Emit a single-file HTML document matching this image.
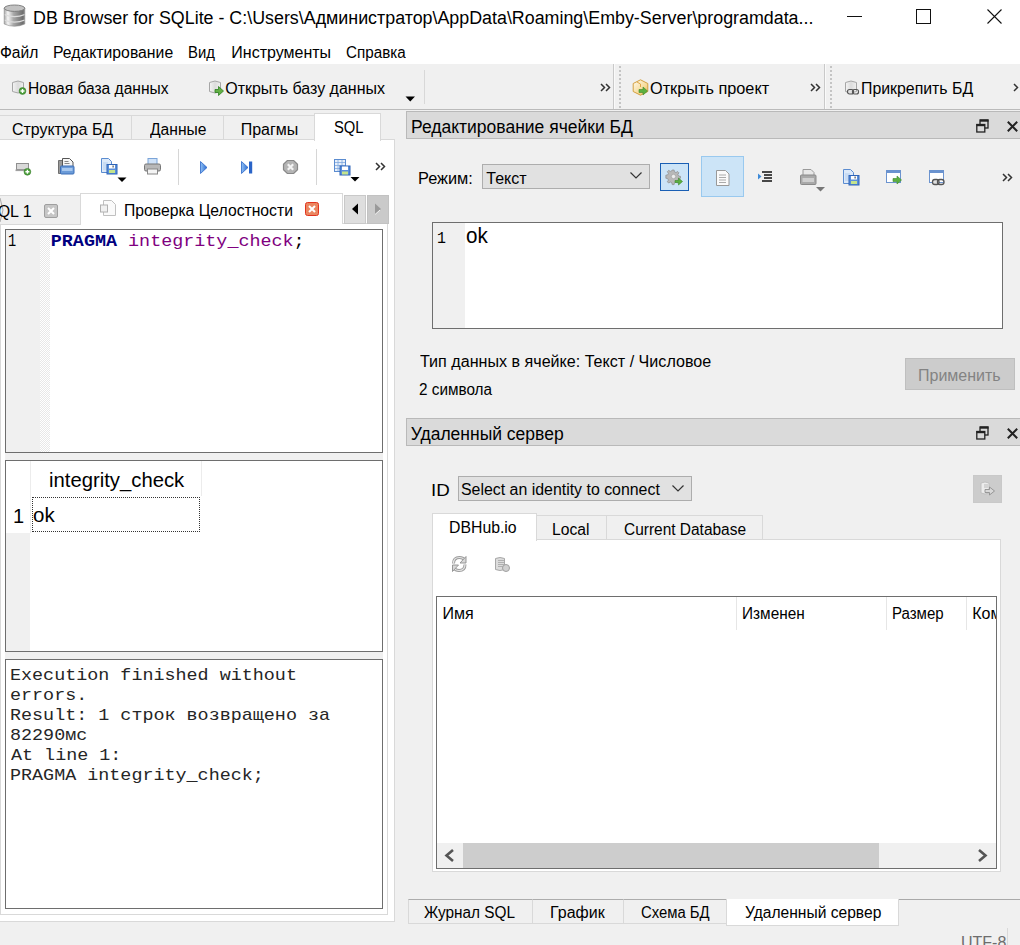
<!DOCTYPE html>
<html><head><meta charset="utf-8"><title>DB Browser for SQLite</title>
<style>
html,body{margin:0;padding:0}
body{width:1020px;height:945px;overflow:hidden;position:relative;background:#f0f0f0;font-family:"Liberation Sans",sans-serif}
.b{position:absolute;box-sizing:border-box}
.t{position:absolute;white-space:pre}
svg{position:absolute;overflow:visible}
</style></head><body>
<!-- title + menu -->
<div class=b style="left:0;top:0;width:1020px;height:64px;background:#fff"></div>
<!-- app icon -->
<svg style="left:3px;top:3px" width="24" height="25" viewBox="0 0 24 25">
<defs><linearGradient id="dbg" x1="0" x2="1"><stop offset="0" stop-color="#a8a8a8"/><stop offset=".18" stop-color="#f6f6f6"/><stop offset=".45" stop-color="#a9a9a9"/><stop offset=".9" stop-color="#6f6f6f"/><stop offset="1" stop-color="#8a8a8a"/></linearGradient></defs>
<path d="M1.2 5 Q11.5 0.5 21.8 5 V21 Q11.5 25.5 1.2 21 Z" fill="url(#dbg)"/>
<ellipse cx="11.5" cy="5.2" rx="10.3" ry="3.2" fill="#c2c2c2" stroke="#777" stroke-width=".9"/>
<path d="M1.2 11.5 Q11.5 15.8 21.8 11.5 M1.2 17 Q11.5 21.3 21.8 17" stroke="#dcdcdc" stroke-width="1.3" fill="none"/>
<path d="M1.2 5 V21 Q11.5 25.5 21.8 21 V5" stroke="#8a8a8a" stroke-width=".6" fill="none"/>
</svg>
<!-- window controls -->
<div class=b style="left:847px;top:16px;width:15px;height:1px;background:#111"></div>
<div class=b style="left:916px;top:9px;width:15px;height:15px;border:1px solid #111"></div>
<svg style="left:987px;top:9px" width="15" height="15" viewBox="0 0 15 15"><path d="M0.5 0.5 L14.5 14.5 M14.5 0.5 L0.5 14.5" stroke="#111" stroke-width="1.1"/></svg>

<!-- toolbar bottom line -->
<div class=b style="left:0;top:109px;width:1020px;height:1px;background:#bababa"></div>
<!-- toolbar icons -->
<svg style="left:12px;top:80px" width="16" height="16" viewBox="0 0 16 16">
<defs><linearGradient id="cyl" x1="0" x2="1"><stop offset="0" stop-color="#f4f4f4"/><stop offset=".5" stop-color="#dcdcdc"/><stop offset="1" stop-color="#f0f0f0"/></linearGradient></defs>
<path d="M0.5 2.5 Q6 -0.5 11.5 2.5 V11.5 Q6 14.5 0.5 11.5 Z" fill="url(#cyl)" stroke="#a6a6a6"/>
<circle cx="10.5" cy="11" r="3.4" fill="#4a9e3a" stroke="#3a7f2d" stroke-width=".6"/><path d="M10.5 9v4M8.5 11h4" stroke="#fff" stroke-width="1.4"/>
</svg>
<svg style="left:209px;top:80px" width="16" height="16" viewBox="0 0 16 16">
<path d="M0.5 2.5 Q6 -0.5 11.5 2.5 V11.5 Q6 14.5 0.5 11.5 Z" fill="url(#cyl)" stroke="#a6a6a6"/>
<path d="M6 9.5h3.5v-3l5 4.5-5 4.5v-3h-3.5z" fill="#62b044" stroke="#2f7f22" stroke-width=".8"/>
</svg>
<svg style="left:405px;top:96px" width="11" height="6" viewBox="0 0 11 6"><path d="M0.5 0.5 H10 L5.25 5.5Z" fill="#000"/></svg>
<div class=b style="left:424px;top:70px;width:1px;height:34px;background:#d8d8d8"></div>
<!-- >> glyphs -->
<svg style="left:600px;top:83px" width="11" height="9" viewBox="0 0 11 9"><path d="M1 1 L4.5 4.5 L1 8 M6 1 L9.5 4.5 L6 8" stroke="#333" stroke-width="1.5" fill="none"/></svg>
<div class=b style="left:613px;top:64px;width:1px;height:45px;background:#c9c9c9"></div><div class=b style="left:614px;top:64px;width:1px;height:45px;background:#fafafa"></div>
<div class=b style="left:618.5px;top:66px;width:2px;height:42px;background:repeating-linear-gradient(#c4c4c4 0 2px,transparent 2px 4px)"></div>
<svg style="left:632px;top:79px" width="17" height="17" viewBox="0 0 17 17">
<defs><linearGradient id="cube" x1="0" y1="0" x2="1" y2="1"><stop offset="0" stop-color="#fffaf0"/><stop offset=".6" stop-color="#f7dc9a"/><stop offset="1" stop-color="#e9b54e"/></linearGradient></defs>
<path d="M8.5 0.8 L15.8 4.5 V12.5 L8.5 16.2 L1.2 12.5 V4.5 Z" fill="url(#cube)" stroke="#d3a040"/>
<path d="M5 3 L8.5 5 V8" stroke="#e0a848" fill="none"/>
<path d="M7 10.5h4v-2.5l4.5 4-4.5 4v-2.5h-4z" fill="#5cb040" stroke="#3d8a2a" stroke-width=".6"/>
</svg>
<svg style="left:810px;top:83px" width="11" height="9" viewBox="0 0 11 9"><path d="M1 1 L4.5 4.5 L1 8 M6 1 L9.5 4.5 L6 8" stroke="#333" stroke-width="1.5" fill="none"/></svg>
<div class=b style="left:824px;top:64px;width:1px;height:45px;background:#c9c9c9"></div><div class=b style="left:825px;top:64px;width:1px;height:45px;background:#fafafa"></div>
<div class=b style="left:829.5px;top:66px;width:2px;height:42px;background:repeating-linear-gradient(#c4c4c4 0 2px,transparent 2px 4px)"></div>
<svg style="left:845px;top:80px" width="16" height="16" viewBox="0 0 16 16">
<path d="M0.5 2.5 Q6 -0.5 11.5 2.5 V11.5 Q6 14.5 0.5 11.5 Z" fill="url(#cyl)" stroke="#a6a6a6"/>
<rect x="2.5" y="9.5" width="6" height="4.5" rx="2" fill="#e0e0e0" stroke="#555" stroke-width="1.2"/><rect x="7.5" y="9.5" width="6" height="4.5" rx="2" fill="none" stroke="#555" stroke-width="1.2"/>
</svg>
<svg style="left:1013px;top:83px" width="11" height="9" viewBox="0 0 11 9"><path d="M1 1 L4.5 4.5 L1 8" stroke="#333" stroke-width="1.5" fill="none"/></svg>

<!-- ========== LEFT PANEL ========== -->
<!-- main tabs -->
<div class=b style="left:-1px;top:115px;width:133px;height:25px;border:1px solid #d9d9d9;background:#f0f0f0"></div>
<div class=b style="left:132px;top:115px;width:92px;height:25px;border:1px solid #d9d9d9;border-left:none;background:#f0f0f0"></div>
<div class=b style="left:224px;top:115px;width:91px;height:25px;border:1px solid #d9d9d9;border-left:none;background:#f0f0f0"></div>
<!-- page -->
<div class=b style="left:-1px;top:139px;width:396px;height:783px;border:1px solid #d9d9d9;background:#fff"></div>
<div class=b style="left:314px;top:113px;width:67px;height:28px;border:1px solid #d9d9d9;border-bottom:none;background:#fff"></div>
<!-- sql toolbar icons -->
<svg style="left:15px;top:160px" width="18" height="17" viewBox="0 0 18 17">
<rect x="1.5" y="3.5" width="12" height="6" fill="#d9d9d9" stroke="#8f8f8f"/><rect x="0.5" y="9.5" width="14" height="1.6" fill="#a0a0a0"/>
<circle cx="12.4" cy="11.8" r="3.4" fill="#4a9e3a" stroke="#3a7f2d" stroke-width=".6"/><path d="M12.4 9.8v4M10.4 11.8h4" stroke="#fff" stroke-width="1.4"/>
</svg>
<svg style="left:58px;top:158px" width="17" height="17" viewBox="0 0 17 17">
<path d="M0.5 2.5h4v13h-4z" fill="#9a9a9a" stroke="#6f6f6f"/>
<path d="M4.5 0.5h7l3.5 3.5v6h-10.5z" fill="#f6f6f6" stroke="#555"/><path d="M6.5 3.5h4M6.5 5.5h5" stroke="#888"/>
<rect x="2.5" y="8" width="13.5" height="8" rx="1" fill="#6b9bd8" stroke="#3d6fb8"/><rect x="4" y="10" width="10.5" height="3" fill="#a8c8ef"/>
</svg>
<svg style="left:101px;top:158px" width="26" height="25" viewBox="0 0 26 25">
<path d="M0.5 0.5h7l3 3v11h-10z" fill="#dce9f9" stroke="#5b8cd0"/><path d="M2 5h5M2 7h4M2 9h4M2 11h4" stroke="#a9c6ec" stroke-width=".8"/>
<rect x="6" y="6.5" width="10" height="9.5" fill="#5a8fda" stroke="#2f64b8"/><rect x="8" y="7" width="6" height="3.5" fill="#fff"/><rect x="11.5" y="7.5" width="1.2" height="2" fill="#456"/><rect x="8" y="12" width="6" height="3" fill="#c4e48c"/>
<path d="M16.5 19.5h9l-4.5 4.5z" fill="#000"/>
</svg>
<svg style="left:144px;top:158px" width="17" height="17" viewBox="0 0 17 17">
<rect x="4" y="0.5" width="9" height="6" fill="#cfe2f8" stroke="#7ba4d8"/>
<rect x="0.5" y="6" width="16" height="7" rx="1.5" fill="#b8b8b8" stroke="#777"/>
<rect x="3.5" y="11" width="10" height="5" fill="#f4f4f4" stroke="#888"/>
</svg>
<div class=b style="left:178px;top:149px;width:1px;height:36px;background:#d6d6d6"></div>
<svg style="left:200px;top:161px" width="8" height="13" viewBox="0 0 8 13"><defs><linearGradient id="pl" x1="0" x2="1"><stop offset="0" stop-color="#8fc0f4"/><stop offset="1" stop-color="#2a6ad0"/></linearGradient></defs><path d="M0.5 0.5 L7 6.5 L0.5 12.5Z" fill="url(#pl)" stroke="#2a64c8" stroke-width=".8"/></svg>
<svg style="left:241px;top:161px" width="12" height="13" viewBox="0 0 12 13"><path d="M0.5 0.5 L7 6.5 L0.5 12.5Z" fill="url(#pl)" stroke="#2a64c8" stroke-width=".8"/><rect x="8" y="0.5" width="3.2" height="12" fill="#2a64c8"/></svg>
<svg style="left:283px;top:160px" width="15" height="14" viewBox="0 0 15 14"><path d="M4.3 0.5h6.4l3.8 3.8v5.4l-3.8 3.8H4.3L0.5 9.7V4.3z" fill="#b4b4b4" stroke="#888" stroke-width="1.2"/><path d="M4.8 4.3l5.4 5.4M10.2 4.3l-5.4 5.4" stroke="#f4f4f4" stroke-width="2.2"/></svg>
<div class=b style="left:316px;top:149px;width:1px;height:36px;background:#d6d6d6"></div>
<svg style="left:334px;top:159px" width="26" height="23" viewBox="0 0 26 23">
<rect x="0.5" y="0.5" width="11" height="12" fill="#e8f0fa" stroke="#5b8cd0"/><path d="M1 3.5h10M1 6.5h10M1 9.5h10M4 1v11M8 1v11" stroke="#7fa8e0" stroke-width=".8"/>
<rect x="6" y="7" width="10" height="9" fill="#5a8fda" stroke="#2f64b8"/><rect x="8" y="7.5" width="6" height="3.5" fill="#fff"/><rect x="8" y="12.5" width="6" height="3" fill="#c4e48c"/>
<path d="M16.5 18h9l-4.5 4.5z" fill="#000"/>
</svg>
<svg style="left:375px;top:162px" width="11" height="9" viewBox="0 0 11 9"><path d="M1 1 L4.5 4.5 L1 8 M6 1 L9.5 4.5 L6 8" stroke="#333" stroke-width="1.5" fill="none"/></svg>

<!-- inner tab widget -->
<div class=b style="left:0px;top:223px;width:388px;height:692px;border:1px solid #d9d9d9;background:#fff"></div>
<div class=b style="left:-1px;top:195px;width:82px;height:30px;border:1px solid #d9d9d9;background:#f0f0f0"></div>
<svg style="left:0;top:196px" width="4" height="28" viewBox="0 0 4 28"><path d="M0 2 L3 14 L0 26" stroke="#aaa" fill="none"/></svg>
<div class=b style="left:44px;top:204px;width:14px;height:14px;background:#c6c6c6;border:1px solid #9f9f9f;border-radius:2px"></div>
<svg style="left:47px;top:207px" width="8" height="8" viewBox="0 0 8 8"><path d="M1 1 L7 7 M7 1 L1 7" stroke="#fff" stroke-width="2"/></svg>
<div class=b style="left:80px;top:193px;width:263px;height:31px;border:1px solid #d9d9d9;border-bottom:none;background:#fff"></div>
<svg style="left:100px;top:200px" width="17" height="16" viewBox="0 0 17 16"><path d="M3.5 0.5h8l4 4v11h-12z" fill="#fafafa" stroke="#c0c0c0"/><rect x="0.5" y="5" width="7" height="7" fill="#f0f0f0" stroke="#b0b0b0"/></svg>
<div class=b style="left:305px;top:202px;width:14px;height:14px;background:#ea8660;border:1.5px solid #e2341e;border-radius:2.5px"></div>
<svg style="left:308px;top:205px" width="8" height="8" viewBox="0 0 8 8"><path d="M1 1 L7 7 M7 1 L1 7" stroke="#fff" stroke-width="2"/></svg>
<!-- scroll buttons -->
<div class=b style="left:344px;top:195px;width:22px;height:29px;background:#dedede;border:1px solid #c9c9c9"></div>
<div class=b style="left:367px;top:195px;width:22px;height:29px;background:#cacaca;border:1px solid #c2c2c2"></div>
<svg style="left:351px;top:203px" width="8" height="12" viewBox="0 0 8 12"><path d="M7 0.5 L1 6 L7 11.5Z" fill="#000"/></svg>
<svg style="left:374px;top:203px" width="8" height="12" viewBox="0 0 8 12"><path d="M1 0.5 L7 6 L1 11.5Z" fill="#9a9a9a"/><path d="M1 11.5 L6 7" stroke="#f4f4f4" stroke-width="1"/></svg>

<!-- editor -->
<div class=b style="left:5px;top:229px;width:378px;height:224px;border:1px solid #6e6e6e;background:#fff"></div>
<div class=b style="left:6px;top:230px;width:34px;height:222px;background:#f0f0f0"></div>
<div class=b style="left:40px;top:230px;width:10px;height:222px;background:repeating-conic-gradient(#e8e8e8 0 25%, #ffffff 0 50%) 0 0/2px 2px"></div>

<div class=b style="left:5px;top:453px;width:378px;height:7px;background:#f0f0f0"></div>
<div class=b style="left:5px;top:652px;width:378px;height:7px;background:#f0f0f0"></div>
<!-- result grid -->
<div class=b style="left:5px;top:460px;width:378px;height:192px;border:1px solid #6e6e6e;background:#fff"></div>
<div class=b style="left:6px;top:533px;width:24px;height:118px;background:#f0f0f0"></div>
<div class=b style="left:30px;top:461px;width:1px;height:72px;background:#ececec"></div>
<div class=b style="left:201px;top:461px;width:1px;height:35px;background:#ececec"></div>
<div class=b style="left:32px;top:497px;width:168px;height:35px;border:1px dotted #333"></div>

<!-- messages -->
<div class=b style="left:5px;top:659px;width:378px;height:250px;border:1px solid #6e6e6e;background:#fff"></div>

<!-- ========== RIGHT DOCK 1 ========== -->
<div class=b style="left:406px;top:111px;width:620px;height:28px;border:1px solid #b9b9b9;background:#dadada"></div>
<svg style="left:976px;top:119px" width="13" height="14" viewBox="0 0 13 14">
<rect x="4" y="1" width="8" height="8" fill="none" stroke="#222" stroke-width="1.3"/><rect x="4" y="0.5" width="8.5" height="2.2" fill="#222"/>
<rect x="0.8" y="5.5" width="8" height="7.5" fill="#dadada" stroke="#222" stroke-width="1.3"/><rect x="0.5" y="5" width="8.5" height="2.2" fill="#222"/>
</svg>
<svg style="left:1007px;top:121px" width="11" height="11" viewBox="0 0 11 11"><path d="M0.8 0.8 L10.2 10.2 M10.2 0.8 L0.8 10.2" stroke="#222" stroke-width="2"/></svg>

<!-- mode combo -->
<div class=b style="left:482px;top:164px;width:168px;height:25px;border:1px solid #adadad;background:#e1e1e1"></div>
<svg style="left:630px;top:172px" width="12" height="7" viewBox="0 0 12 7"><path d="M0.5 0.5 L6 6 L11.5 0.5" stroke="#333" stroke-width="1.2" fill="none"/></svg>
<div class=b style="left:660px;top:163px;width:29px;height:28px;border:1.5px solid #1a5fb4;background:#cce4f7"></div>
<svg style="left:667px;top:170px" width="16" height="16" viewBox="0 0 16 16">
<path d="M6 0.5h2l.4 2 1.6.7 1.7-1.1 1.4 1.4-1.1 1.7.7 1.6 2 .4v2l-2 .4-.7 1.6 1.1 1.7-1.4 1.4-1.7-1.1-1.6.7-.4 2H6l-.4-2-1.6-.7-1.7 1.1-1.4-1.4 1.1-1.7-.7-1.6-2-.4V6l2-.4.7-1.6-1.1-1.7 1.4-1.4 1.7 1.1 1.6-.7z" transform="translate(-.5 -.5) scale(.95)" fill="#b8b8b8" stroke="#8a8a8a" stroke-width=".7"/><circle cx="6.5" cy="6.5" r="2.2" fill="#ececec" stroke="#999" stroke-width=".6"/>
<path d="M8 10.5h3.5v-2.5l4 3.5-4 3.5v-2.5H8z" fill="#5cb040" stroke="#3d8a2a" stroke-width=".6"/>
</svg>
<div class=b style="left:701px;top:156px;width:43px;height:41px;border:1px solid #99c9ef;background:#cce4f7"></div>
<svg style="left:716px;top:170px" width="14" height="16" viewBox="0 0 14 16"><path d="M0.5 0.5h9l3.5 3.5v11.5h-12.5z" fill="#fafafa" stroke="#999"/><path d="M3 5h7M3 7.5h7M3 10h7M3 12.5h7" stroke="#aaa"/></svg>
<svg style="left:758px;top:171px" width="14" height="12" viewBox="0 0 14 12"><path d="M4 1h10M6 4h8M6 7h8M4 10h10" stroke="#111" stroke-width="1.4"/><path d="M0 2.5 L3.5 5.5 L0 8.5Z" fill="#3d8ad8"/></svg>
<svg style="left:800px;top:169px" width="26" height="23" viewBox="0 0 26 23">
<path d="M3 0.5h8l3 3v5h-11z" fill="#e8e8e8" stroke="#9a9a9a"/>
<rect x="0.5" y="6" width="15.5" height="9.5" rx="1" fill="#a9a9a9" stroke="#8a8a8a"/><rect x="2.5" y="9" width="11.5" height="4" fill="#cfcfcf"/>
<path d="M16 18h9l-4.5 4.5z" fill="#777"/>
</svg>
<svg style="left:843px;top:169px" width="17" height="17" viewBox="0 0 17 17">
<path d="M0.5 0.5h7l3 3v11h-10z" fill="#dce9f9" stroke="#5b8cd0"/><path d="M2 5h5M2 7h4M2 9h4M2 11h4" stroke="#a9c6ec" stroke-width=".8"/>
<rect x="6" y="6.5" width="10" height="9.5" fill="#5a8fda" stroke="#2f64b8"/><rect x="8" y="7" width="6" height="3.5" fill="#fff"/><rect x="11.5" y="7.5" width="1.2" height="2" fill="#456"/><rect x="8" y="12" width="6" height="3" fill="#c4e48c"/>
</svg>
<svg style="left:886px;top:170px" width="17" height="16" viewBox="0 0 17 16">
<rect x="0.5" y="0.5" width="14" height="12" fill="#fff" stroke="#6b93cf"/><rect x="0.5" y="0.5" width="14" height="2.5" fill="#6b93cf"/>
<path d="M7 8.5h4v-2.5l4.5 4-4.5 4v-2.5h-4z" fill="#5cb040" stroke="#3d8a2a" stroke-width=".6"/>
</svg>
<svg style="left:929px;top:170px" width="17" height="16" viewBox="0 0 17 16">
<rect x="0.5" y="0.5" width="14" height="12" fill="#fff" stroke="#6b93cf"/><rect x="0.5" y="0.5" width="14" height="2.5" fill="#6b93cf"/>
<rect x="3.5" y="9.5" width="6.5" height="5" rx="2.3" fill="#e0e0e0" stroke="#555" stroke-width="1.3"/><rect x="8.5" y="9.5" width="6.5" height="5" rx="2.3" fill="none" stroke="#555" stroke-width="1.3"/>
</svg>
<svg style="left:1002px;top:173px" width="11" height="9" viewBox="0 0 11 9"><path d="M1 1 L4.5 4.5 L1 8 M6 1 L9.5 4.5 L6 8" stroke="#333" stroke-width="1.5" fill="none"/></svg>

<!-- cell edit box -->
<div class=b style="left:432px;top:222px;width:571px;height:107px;border:1px solid #6e6e6e;background:#fff"></div>
<div class=b style="left:433px;top:223px;width:32px;height:105px;background:#f0f0f0"></div>
<!-- apply button -->
<div class=b style="left:905px;top:358px;width:110px;height:32px;border:1px solid #bfbfbf;background:#cccccc"></div>

<!-- ========== RIGHT DOCK 2 ========== -->
<div class=b style="left:406px;top:418px;width:620px;height:28px;border:1px solid #b9b9b9;background:#dadada"></div>
<svg style="left:976px;top:426px" width="13" height="14" viewBox="0 0 13 14">
<rect x="4" y="1" width="8" height="8" fill="none" stroke="#222" stroke-width="1.3"/><rect x="4" y="0.5" width="8.5" height="2.2" fill="#222"/>
<rect x="0.8" y="5.5" width="8" height="7.5" fill="#dadada" stroke="#222" stroke-width="1.3"/><rect x="0.5" y="5" width="8.5" height="2.2" fill="#222"/>
</svg>
<svg style="left:1007px;top:428px" width="11" height="11" viewBox="0 0 11 11"><path d="M0.8 0.8 L10.2 10.2 M10.2 0.8 L0.8 10.2" stroke="#222" stroke-width="2"/></svg>

<!-- identity combo -->
<div class=b style="left:458px;top:476px;width:234px;height:25px;border:1px solid #adadad;background:#e1e1e1"></div>
<svg style="left:672px;top:485px" width="12" height="7" viewBox="0 0 12 7"><path d="M0.5 0.5 L6 6 L11.5 0.5" stroke="#333" stroke-width="1.2" fill="none"/></svg>
<div class=b style="left:973px;top:475px;width:29px;height:28px;border:1px solid #c9c9c9;background:#cccccc"></div>
<svg style="left:980px;top:481px" width="16" height="17" viewBox="0 0 16 17"><path d="M1 2 Q5 0 9 2 V12 Q5 14 1 12Z" fill="#ececec" stroke="#c0c0c0"/><path d="M4 4h4M4 6h4" stroke="#bbb"/><path d="M5 8.5h4.5v-2.5l5 4-5 4v-2.5H5z" fill="#d8d8d8" stroke="#909090" stroke-width=".9"/></svg>

<!-- tab widget -->
<div class=b style="left:432px;top:539px;width:569px;height:333px;border:1px solid #d9d9d9;background:#fff"></div>
<div class=b style="left:536px;top:515px;width:71px;height:25px;border:1px solid #d9d9d9;background:#f0f0f0"></div>
<div class=b style="left:606px;top:515px;width:157px;height:25px;border:1px solid #d9d9d9;background:#f0f0f0"></div>
<div class=b style="left:432px;top:513px;width:105px;height:28px;border:1px solid #d9d9d9;border-bottom:none;background:#fff"></div>
<svg style="left:452px;top:556px" width="15" height="16" viewBox="0 0 15 16">
<path d="M1.5 7.5 Q1.5 1.5 7.5 1.5 Q11 1.5 12.5 4 M13 8.5 Q13 14.5 7 14.5 Q3.5 14.5 2 12" stroke="#9c9c9c" stroke-width="3" fill="none"/>
<path d="M1.5 7.5 Q1.5 1.5 7.5 1.5 Q11 1.5 12.5 4 M13 8.5 Q13 14.5 7 14.5 Q3.5 14.5 2 12" stroke="#e6e6e6" stroke-width="1.2" fill="none"/>
<path d="M14 0.5 V7 H8Z M0.5 15.5 V9 H6.5Z" fill="#d8d8d8" stroke="#8f8f8f" stroke-width=".9"/></svg>
<svg style="left:495px;top:557px" width="15" height="15" viewBox="0 0 15 15"><path d="M0.5 1.5 Q5 -0.5 9.5 1.5 V12.5 Q5 14.5 0.5 12.5Z" fill="#dcdcdc" stroke="#a8a8a8"/><path d="M3 3.5h6M3 5.5h6M3 7.5h6M3 9.5h6" stroke="#b0b0b0"/><circle cx="11" cy="11" r="3.5" fill="#d0d0d0" stroke="#a0a0a0"/></svg>
<!-- tree view -->
<div class=b style="left:436px;top:596px;width:561px;height:273px;border:1px solid #6e6e6e;background:#fff"></div>
<div class=b style="left:736px;top:597px;width:1px;height:33px;background:#e6e6e6"></div>
<div class=b style="left:886px;top:597px;width:1px;height:33px;background:#e6e6e6"></div>
<div class=b style="left:966px;top:597px;width:1px;height:33px;background:#e6e6e6"></div>
<!-- scrollbar -->
<div class=b style="left:437px;top:843px;width:559px;height:25px;background:#f0f0f0"></div>
<div class=b style="left:463px;top:843px;width:416px;height:25px;background:#cdcdcd"></div>
<svg style="left:444px;top:849px" width="11" height="13" viewBox="0 0 11 13"><path d="M9 1 L2.5 6.5 L9 12" stroke="#555" stroke-width="2.6" fill="none"/></svg>
<svg style="left:977px;top:849px" width="11" height="13" viewBox="0 0 11 13"><path d="M2 1 L8.5 6.5 L2 12" stroke="#555" stroke-width="2.6" fill="none"/></svg>

<!-- bottom tabs -->
<div class=b style="left:898px;top:899px;width:122px;height:1px;background:#a9a9a9"></div>
<div class=b style="left:408px;top:899px;width:125px;height:25px;border:1px solid #d9d9d9;border-top-color:#acacac;background:#f0f0f0"></div>
<div class=b style="left:532px;top:899px;width:92px;height:25px;border:1px solid #d9d9d9;border-top-color:#acacac;background:#f0f0f0"></div>
<div class=b style="left:623px;top:899px;width:104px;height:25px;border:1px solid #d9d9d9;border-top-color:#acacac;background:#f0f0f0"></div>
<div class=b style="left:726px;top:899px;width:173px;height:27px;border:1px solid #d9d9d9;border-top:none;background:#fff"></div>
<div class=b style="left:1007px;top:928px;width:1px;height:17px;background:#d9d9d9"></div>
<div class=t style="left:32.71px;top:9.30px;font-family:'Liberation Sans', sans-serif;font-size:18px;line-height:18px;color:#000;font-weight:normal;transform:scaleX(0.9915);transform-origin:0 0;">DB Browser for SQLite - C:\Users\Администратор\AppData\Roaming\Emby-Server\programdata...</div>
<div class=t style="left:-0.38px;top:45.00px;font-family:'Liberation Sans', sans-serif;font-size:16px;line-height:16px;color:#000;font-weight:normal;transform:scaleX(0.9757);transform-origin:0 0;">Файл</div>
<div class=t style="left:53.01px;top:45.00px;font-family:'Liberation Sans', sans-serif;font-size:16px;line-height:16px;color:#000;font-weight:normal;transform:scaleX(0.9858);transform-origin:0 0;">Редактирование</div>
<div class=t style="left:188.07px;top:45.00px;font-family:'Liberation Sans', sans-serif;font-size:16px;line-height:16px;color:#000;font-weight:normal;transform:scaleX(0.9286);transform-origin:0 0;">Вид</div>
<div class=t style="left:231.30px;top:45.00px;font-family:'Liberation Sans', sans-serif;font-size:16px;line-height:16px;color:#000;font-weight:normal;">Инструменты</div>
<div class=t style="left:345.55px;top:45.00px;font-family:'Liberation Sans', sans-serif;font-size:16px;line-height:16px;color:#000;font-weight:normal;transform:scaleX(0.9516);transform-origin:0 0;">Справка</div>
<div class=t style="left:27.83px;top:81.00px;font-family:'Liberation Sans', sans-serif;font-size:16px;line-height:16px;color:#000;font-weight:normal;transform:scaleX(0.9734);transform-origin:0 0;">Новая база данных</div>
<div class=t style="left:225.20px;top:81.00px;font-family:'Liberation Sans', sans-serif;font-size:16px;line-height:16px;color:#000;font-weight:normal;">Открыть базу данных</div>
<div class=t style="left:650.18px;top:81.00px;font-family:'Liberation Sans', sans-serif;font-size:16px;line-height:16px;color:#000;font-weight:normal;transform:scaleX(1.0172);transform-origin:0 0;">Открыть проект</div>
<div class=t style="left:861.01px;top:81.00px;font-family:'Liberation Sans', sans-serif;font-size:16px;line-height:16px;color:#000;font-weight:normal;transform:scaleX(0.9911);transform-origin:0 0;">Прикрепить БД</div>
<div class=t style="left:12.31px;top:122.00px;font-family:'Liberation Sans', sans-serif;font-size:16px;line-height:16px;color:#000;font-weight:normal;transform:scaleX(0.9941);transform-origin:0 0;">Структура БД</div>
<div class=t style="left:150.00px;top:122.00px;font-family:'Liberation Sans', sans-serif;font-size:16px;line-height:16px;color:#000;font-weight:normal;transform:scaleX(0.9772);transform-origin:0 0;">Данные</div>
<div class=t style="left:240.70px;top:122.00px;font-family:'Liberation Sans', sans-serif;font-size:16px;line-height:16px;color:#000;font-weight:normal;">Прагмы</div>
<div class=t style="left:334.08px;top:120.00px;font-family:'Liberation Sans', sans-serif;font-size:16px;line-height:16px;color:#000;font-weight:normal;transform:scaleX(0.9226);transform-origin:0 0;">SQL</div>
<div class=t style="left:-13.00px;top:204.00px;font-family:'Liberation Sans', sans-serif;font-size:16px;line-height:16px;color:#000;font-weight:normal;">SQL 1</div>
<div class=t style="left:123.52px;top:203.00px;font-family:'Liberation Sans', sans-serif;font-size:16px;line-height:16px;color:#000;font-weight:normal;transform:scaleX(0.9818);transform-origin:0 0;">Проверка Целостности</div>
<div class=t style="left:8.46px;top:233.02px;font-family:'Liberation Mono', monospace;font-size:18.4px;line-height:18.4px;color:#000;font-weight:normal;transform:scaleX(0.7444);transform-origin:0 0;">1</div>
<div class=t style="left:50.80px;top:233.02px;font-family:'Liberation Mono', monospace;font-size:18.4px;line-height:18.4px;color:#000;font-weight:normal;transform:scale(1.0000,0.9000);transform-origin:0 13.98px;"><b style="color:#000080">PRAGMA</b> <span style="color:#800080">integrity_check</span>;</div>
<div class=t style="left:48.99px;top:470.00px;font-family:'Liberation Sans', sans-serif;font-size:20px;line-height:20px;color:#000;font-weight:normal;transform:scaleX(1.0136);transform-origin:0 0;">integrity_check</div>
<div class=t style="left:13.00px;top:506.00px;font-family:'Liberation Sans', sans-serif;font-size:20px;line-height:20px;color:#000;font-weight:normal;">1</div>
<div class=t style="left:33.48px;top:505.10px;font-family:'Liberation Sans', sans-serif;font-size:20px;line-height:20px;color:#000;font-weight:normal;transform:scaleX(1.0250);transform-origin:0 0;">ok</div>
<div class=t style="left:10.00px;top:667.22px;font-family:'Liberation Mono', monospace;font-size:18.4px;line-height:18.4px;color:#262626;font-weight:normal;transform:scale(1.0000,0.9000);transform-origin:0 13.98px;">Execution finished without</div>
<div class=t style="left:10.00px;top:687.22px;font-family:'Liberation Mono', monospace;font-size:18.4px;line-height:18.4px;color:#262626;font-weight:normal;transform:scale(1.0000,0.9000);transform-origin:0 13.98px;">errors.</div>
<div class=t style="left:10.00px;top:707.22px;font-family:'Liberation Mono', monospace;font-size:18.4px;line-height:18.4px;color:#262626;font-weight:normal;transform:scale(1.0000,0.9000);transform-origin:0 13.98px;">Result: 1 строк возвращено за</div>
<div class=t style="left:10.00px;top:727.22px;font-family:'Liberation Mono', monospace;font-size:18.4px;line-height:18.4px;color:#262626;font-weight:normal;transform:scale(1.0000,0.9000);transform-origin:0 13.98px;">82290мс</div>
<div class=t style="left:11.00px;top:747.22px;font-family:'Liberation Mono', monospace;font-size:18.4px;line-height:18.4px;color:#262626;font-weight:normal;transform:scale(1.0000,0.9000);transform-origin:0 13.98px;">At line 1:</div>
<div class=t style="left:10.00px;top:767.22px;font-family:'Liberation Mono', monospace;font-size:18.4px;line-height:18.4px;color:#262626;font-weight:normal;transform:scale(1.0000,0.9000);transform-origin:0 13.98px;">PRAGMA integrity_check;</div>
<div class=t style="left:411.00px;top:118.62px;font-family:'Liberation Sans', sans-serif;font-size:17.5px;line-height:17.5px;color:#000;font-weight:normal;">Редактирование ячейки БД</div>
<div class=t style="left:418.48px;top:171.40px;font-family:'Liberation Sans', sans-serif;font-size:16px;line-height:16px;color:#000;font-weight:normal;transform:scaleX(1.0196);transform-origin:0 0;">Режим:</div>
<div class=t style="left:486.30px;top:171.40px;font-family:'Liberation Sans', sans-serif;font-size:16px;line-height:16px;color:#000;font-weight:normal;">Текст</div>
<div class=t style="left:436.90px;top:231.06px;font-family:'Liberation Mono', monospace;font-size:16.5px;line-height:16.5px;color:#000;font-weight:normal;transform:scaleX(0.9000);transform-origin:0 0;">1</div>
<div class=t style="left:465.66px;top:224.70px;font-family:'Liberation Sans', sans-serif;font-size:22px;line-height:22px;color:#000;font-weight:normal;transform:scaleX(0.9364);transform-origin:0 0;">ok</div>
<div class=t style="left:420.00px;top:354.30px;font-family:'Liberation Sans', sans-serif;font-size:16px;line-height:16px;color:#000;font-weight:normal;transform:scaleX(1.0059);transform-origin:0 0;">Тип данных в ячейке: Текст / Числовое</div>
<div class=t style="left:419.04px;top:382.00px;font-family:'Liberation Sans', sans-serif;font-size:16px;line-height:16px;color:#000;font-weight:normal;transform:scaleX(0.9566);transform-origin:0 0;">2 символа</div>
<div class=t style="left:918.00px;top:368.40px;font-family:'Liberation Sans', sans-serif;font-size:16px;line-height:16px;color:#838383;font-weight:normal;">Применить</div>
<div class=t style="left:410.70px;top:425.73px;font-family:'Liberation Sans', sans-serif;font-size:17.5px;line-height:17.5px;color:#000;font-weight:normal;">Удаленный сервер</div>
<div class=t style="left:431.23px;top:482.90px;font-family:'Liberation Sans', sans-serif;font-size:16px;line-height:16px;color:#000;font-weight:normal;transform:scaleX(1.1714);transform-origin:0 0;">ID</div>
<div class=t style="left:461.01px;top:481.90px;font-family:'Liberation Sans', sans-serif;font-size:16px;line-height:16px;color:#000;font-weight:normal;transform:scaleX(0.9935);transform-origin:0 0;">Select an identity to connect</div>
<div class=t style="left:449.31px;top:519.60px;font-family:'Liberation Sans', sans-serif;font-size:16px;line-height:16px;color:#000;font-weight:normal;transform:scaleX(0.9881);transform-origin:0 0;">DBHub.io</div>
<div class=t style="left:552.02px;top:521.70px;font-family:'Liberation Sans', sans-serif;font-size:16px;line-height:16px;color:#000;font-weight:normal;transform:scaleX(0.9778);transform-origin:0 0;">Local</div>
<div class=t style="left:624.33px;top:521.70px;font-family:'Liberation Sans', sans-serif;font-size:16px;line-height:16px;color:#000;font-weight:normal;transform:scaleX(0.9664);transform-origin:0 0;">Current Database</div>
<div class=t style="left:442.50px;top:606.00px;font-family:'Liberation Sans', sans-serif;font-size:16px;line-height:16px;color:#000;font-weight:normal;">Имя</div>
<div class=t style="left:742.24px;top:606.00px;font-family:'Liberation Sans', sans-serif;font-size:16px;line-height:16px;color:#000;font-weight:normal;transform:scaleX(0.9603);transform-origin:0 0;">Изменен</div>
<div class=t style="left:892.06px;top:606.00px;font-family:'Liberation Sans', sans-serif;font-size:16px;line-height:16px;color:#000;font-weight:normal;transform:scaleX(0.9396);transform-origin:0 0;">Размер</div>
<div class=t style="left:972.30px;top:606.00px;font-family:'Liberation Sans', sans-serif;font-size:16px;line-height:16px;color:#000;font-weight:normal;clip-path:polygon(-10px -10px,23.70px -10px,23.70px 60px,-10px 60px);">Ком</div>
<div class=t style="left:423.90px;top:905.00px;font-family:'Liberation Sans', sans-serif;font-size:16px;line-height:16px;color:#000;font-weight:normal;transform:scaleX(0.9589);transform-origin:0 0;">Журнал SQL</div>
<div class=t style="left:550.00px;top:905.00px;font-family:'Liberation Sans', sans-serif;font-size:16px;line-height:16px;color:#000;font-weight:normal;">График</div>
<div class=t style="left:640.67px;top:905.00px;font-family:'Liberation Sans', sans-serif;font-size:16px;line-height:16px;color:#000;font-weight:normal;transform:scaleX(0.9288);transform-origin:0 0;">Схема БД</div>
<div class=t style="left:745.33px;top:905.00px;font-family:'Liberation Sans', sans-serif;font-size:16px;line-height:16px;color:#000;font-weight:normal;transform:scaleX(0.9746);transform-origin:0 0;">Удаленный сервер</div>
<div class=t style="left:961.00px;top:935.00px;font-family:'Liberation Sans', sans-serif;font-size:16px;line-height:16px;color:#6d6d6d;font-weight:normal;">UTF-8</div>
</body></html>
